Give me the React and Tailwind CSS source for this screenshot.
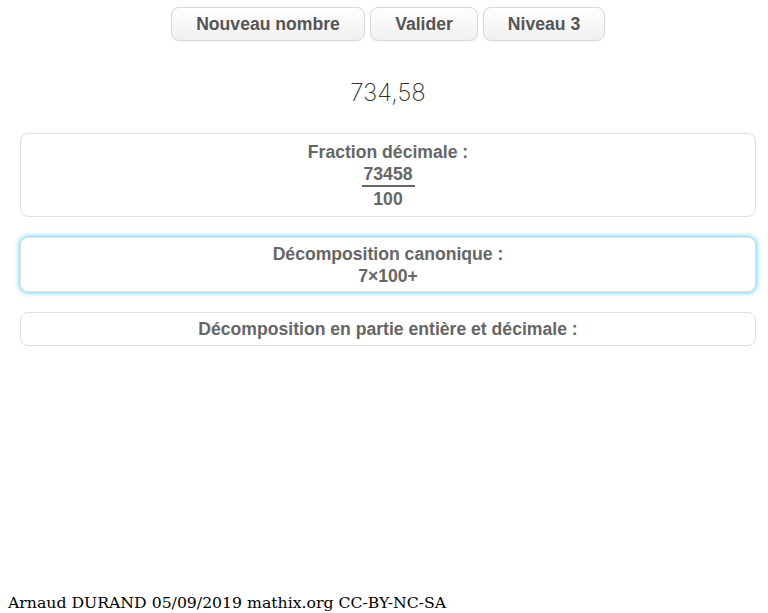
export default function App() {
  const btn =
    "rounded-lg border border-[#d9d9d9] bg-gradient-to-b from-[#ffffff] to-[#f0f0f0] h-[34px] text-[17.6px] font-bold text-[#555] shadow-[0_1px_2px_rgba(0,0,0,0.06)]";
  const box = "ml-5 w-[736px] rounded-lg border border-[#e0e0e0] bg-white text-center";

  return (
    <div className="h-[613px] overflow-hidden flex flex-col bg-white font-['Liberation_Sans',Arial,sans-serif]">
      <div className="flex justify-center gap-[5px] pt-[7px] pl-2">
        <button className={btn + " w-[194px]"}>Nouveau nombre</button>
        <button className={btn + " w-[108px]"}>Valider</button>
        <button className={btn + " w-[122px]"}>Niveau 3</button>
      </div>

      <div className="mt-[37px] pl-2 text-center text-[24px] font-extralight leading-[30px] text-[#333] font-['Inter',sans-serif]">
        734,58
      </div>

      <div className="mt-[25px] flex flex-col gap-5 text-[17.6px] font-bold leading-[22px] text-[#666]">
        <div className={box + " pt-[7px] pb-[6px]"}>
          <div>Fraction décimale :</div>
          <div className="flex justify-center">
            <div className="flex flex-col items-center">
              <div className="border-b-2 border-[#666] w-[53px]">73458</div>
              <div className="pt-[1px]">100</div>
            </div>
          </div>
        </div>

        <div className={box + " border-[#52c8f0] shadow-[0_0_5px_1px_rgba(82,200,240,0.85)] pt-[5px] pb-[4px]"}>
          <div>Décomposition canonique :</div>
          <div>7×100+</div>
        </div>

        <div className={box + " pt-[5px] pb-[5px]"}>
          <div>Décomposition en partie entière et décimale :</div>
        </div>
      </div>

      <div className="mt-auto pl-2 pb-[1px] text-[15.7px] leading-[19px] text-black font-['DejaVu_Serif',serif]">
        Arnaud DURAND 05/09/2019 mathix.org CC-BY-NC-SA
      </div>
    </div>
  );
}
